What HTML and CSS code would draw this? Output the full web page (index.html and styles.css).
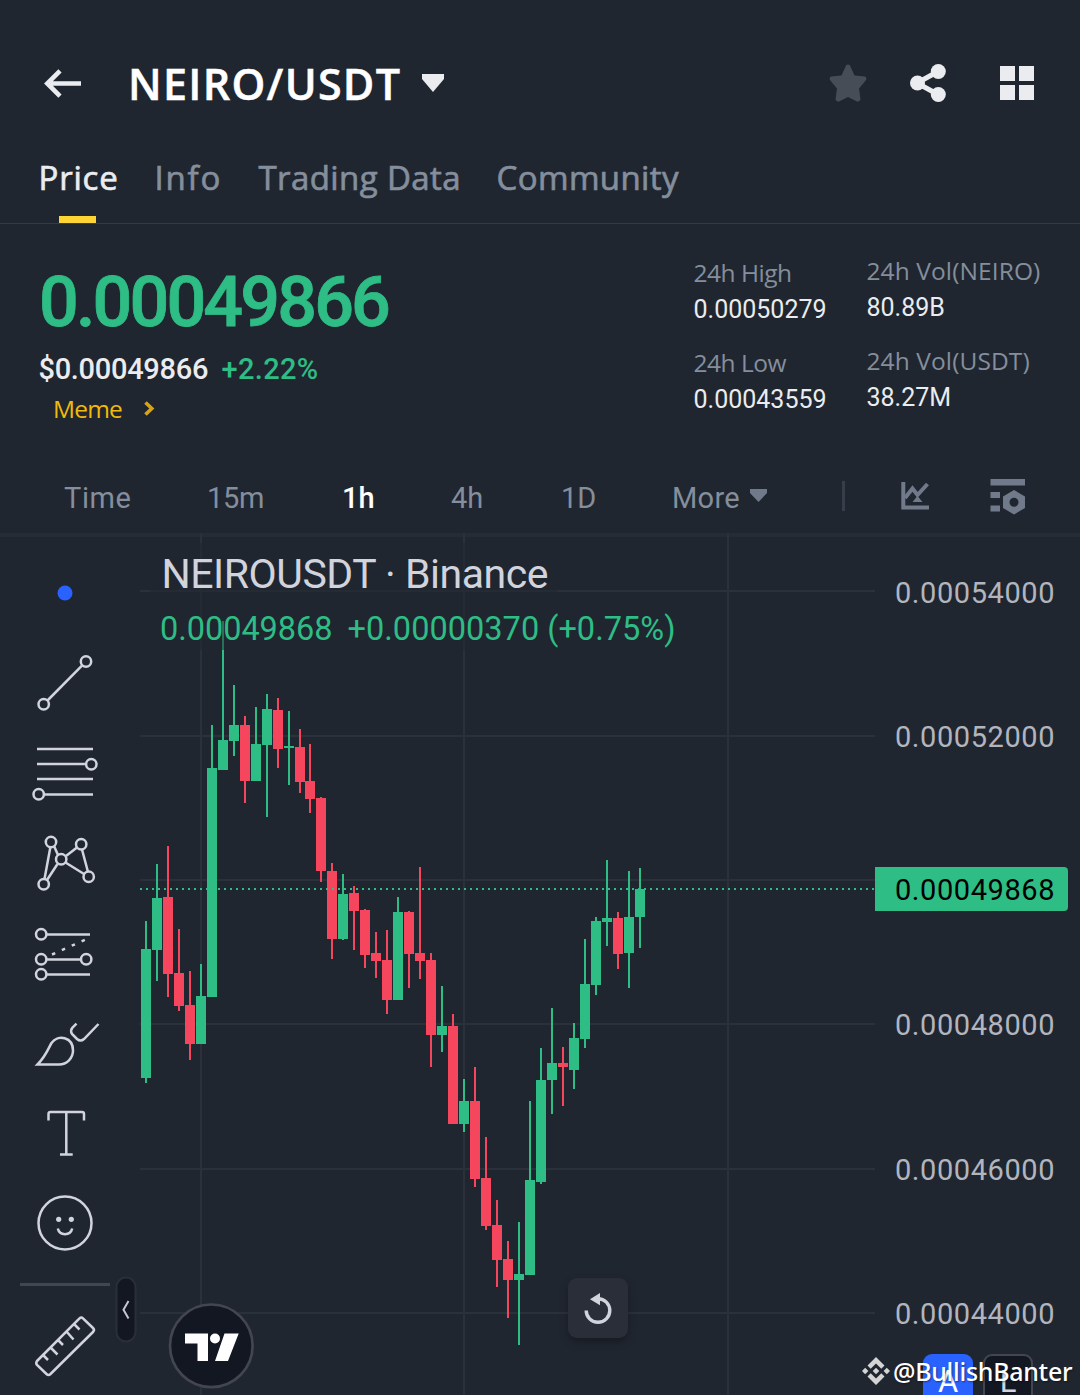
FILE: index.html
```html
<!DOCTYPE html>
<html lang="en">
<head>
<meta charset="utf-8">
<title>NEIRO/USDT</title>
<link rel="stylesheet" href="styles.css">
</head>
<body>
<div class="app">
  <header class="header">
    <svg class="back" width="38" height="30" viewBox="43 69 38 30"><path d="M80 83.500H47M59 70.800L46.300 83.500L59 96.200" fill="none" stroke="#eaecef" stroke-width="4.600"/></svg>
    <h1 class="title">NEIRO/USDT</h1>
    <svg class="title-caret" width="24" height="18" viewBox="0 0 24 18"><path d="M1 0H23V5L12 18L1 5Z" fill="#eaecef"/></svg>
    <div class="actions">
      <svg width="38" height="40" viewBox="0 0 38 40"><path d="M17 2.500Q19 .5 21 2.500L25.500 12.500L36 13.600Q38.500 15.500 36.500 17.800L30 25.500L31.500 36.500Q30 39.500 27.500 38.300L19 34L10.500 38.300Q8 39.500 6.500 36.500L8 25.500L1.500 17.800Q-.5 15.500 2 13.600L12.500 12.500Z" fill="#474d57"/></svg>
      <svg width="36" height="38" viewBox="0 0 36 38"><path d="M28 7.500L7 19L28 30.500" fill="none" stroke="#eaecef" stroke-width="5"/><g fill="#eaecef"><circle cx="28.300" cy="7.500" r="7.500"/><circle cx="7.500" cy="19" r="7.500"/><circle cx="28.300" cy="30.500" r="7.500"/></g></svg>
      <svg width="34" height="34" viewBox="0 0 34 34"><path d="M0 0H15V15H0ZM19 0H34V15H19ZM0 19H15V34H0ZM19 19H34V34H19Z" fill="#eaecef"/></svg>
    </div>
  </header>

  <nav class="tabs">
    <span class="tab tab-active">Price</span>
    <span class="tab tab-info">Info</span>
    <span class="tab tab-trading">Trading Data</span>
    <span class="tab tab-community">Community</span>
  </nav>

  <section class="summary">
    <div class="quote">
      <div class="last-price">0.00049866</div>
      <div class="fiat"><span>$0.00049866</span><span class="change">+2.22%</span></div>
      <div class="category"><span>Meme</span><svg width="11" height="15" viewBox="0 0 11 15"><path d="M1.500 1.500L7.800 7.500L1.500 13.500" fill="none" stroke="#d9a40e" stroke-width="3.600"/></svg></div>
    </div>
    <div class="stats stats-range">
      <div class="stat"><span class="stat-label">24h High</span><span class="stat-value">0.00050279</span></div>
      <div class="stat"><span class="stat-label">24h Low</span><span class="stat-value">0.00043559</span></div>
    </div>
    <div class="stats stats-volume">
      <div class="stat"><span class="stat-label">24h Vol(NEIRO)</span><span class="stat-value">80.89B</span></div>
      <div class="stat"><span class="stat-label">24h Vol(USDT)</span><span class="stat-value">38.27M</span></div>
    </div>
  </section>

  <nav class="intervals">
    <span>Time</span>
    <span>15m</span>
    <span class="interval-active">1h</span>
    <span>4h</span>
    <span>1D</span>
    <span class="more">More<svg width="17" height="13" viewBox="0 0 17 13"><path d="M0 0H17V4L8.500 13L0 4Z" fill="#707a8a"/></svg></span>
    <svg class="interval-tools" width="190" height="40" viewBox="840 476 190 40">
      <path d="M843.500 481V511" stroke="#373e49" stroke-width="3"/>
      <g fill="none" stroke="#707a8a" stroke-width="4"><path d="M903.300 482V507.500H929"/><path d="M905 498L912.500 488.500L917.500 495L927.500 484"/></g>
      <path d="M917.500 496L922.500 502H912.500Z" fill="#707a8a"/>
      <g fill="#707a8a"><path d="M990.500 479H1025V485.500H990.500ZM990.500 492H1000V498H990.500ZM990.500 505.500H1000V511.500H990.500Z"/><path fill-rule="evenodd" d="M1014 490L1025 496.500V508L1014 514.500L1003 508V496.500ZM1014 497.800A4.500 4.500 0 1 0 1014 506.800A4.500 4.500 0 1 0 1014 497.800Z"/></g>
    </svg>
  </nav>

  <main class="chart-area">
    <aside class="toolbar">
      <svg viewBox="20 548 90 90"><circle cx="65" cy="593" r="7.500" fill="#2962ff"/></svg>
      <svg class="tool" viewBox="20 638 90 90"><circle cx="86" cy="661.500" r="5.200"/><circle cx="43.700" cy="704.300" r="5.200"/><path d="M47.500 700.500L82.200 665.300"/></svg>
      <svg class="tool" viewBox="20 728 90 90"><path d="M37 749H93M37 764H86M37 779H93M44 794.500H93"/><circle cx="91.300" cy="764.300" r="5.200"/><circle cx="38.700" cy="794.300" r="5.200"/></svg>
      <svg class="tool" viewBox="20 818 90 90"><path d="M50.400 847L44.500 879M54 846L58 855M47 880L57.500 864M66 856L77 847.500M65.500 862.500L84 874M82 849.500L88 872"/><circle cx="51" cy="842" r="5.200"/><circle cx="81.200" cy="844.300" r="5.200"/><circle cx="61.200" cy="859.300" r="5.200"/><circle cx="43.700" cy="884.300" r="5.200"/><circle cx="88.700" cy="876.700" r="5.200"/></svg>
      <svg class="tool" viewBox="20 908 90 90"><path d="M46.500 934.500H90M46.500 959.500H81M46.500 974.500H90"/><path d="M52 954.500L88 938.500" stroke-dasharray="3.500 7.300"/><circle cx="41.200" cy="934.300" r="5.200"/><circle cx="41.200" cy="959.300" r="5.200"/><circle cx="86.200" cy="959.300" r="5.200"/><circle cx="41.200" cy="974.300" r="5.200"/></svg>
      <svg class="tool" viewBox="20 998 90 90"><path d="M37.500 1064.500C46 1056 48.500 1048 51.500 1043C58 1034 73 1037 73 1050.500C73 1058 67 1064.500 59 1064.500Z"/><path d="M76.500 1023.700L72.500 1027.500Q70 1030.500 72 1034L77 1039Q80.500 1042 84 1039L98.500 1024"/></svg>
      <svg class="tool" viewBox="20 1088 90 90"><path d="M48.500 1120.500V1114Q48.500 1112 50.500 1112H82Q84 1112 84 1114V1120.500M66.300 1112V1154.500M60 1154.500H72.700"/></svg>
      <svg class="tool" viewBox="20 1178 90 90"><circle cx="65" cy="1223" r="26.500"/><path d="M57.800 1228.500C59.500 1236 70.500 1236 72.200 1228.500"/><g class="tool-fill"><circle cx="58.700" cy="1219.300" r="2.600"/><circle cx="71.300" cy="1219.300" r="2.600"/></g></svg>
      <div class="separator"></div>
      <svg class="tool" viewBox="20 1301 90 90"><path d="M37 1361L79.500 1318.500Q81.300 1316.500 83 1318.500L93 1328Q95 1330 93 1332L50.500 1374Q48.500 1376 46.500 1374L37 1365Q35.500 1363 37 1361ZM43.500 1355.500L48 1360M50.500 1347.500L57.500 1354.500M58 1340L63 1345M66.500 1331.500L73.500 1339.500M74 1324L79.500 1329.500"/></svg>
    </aside>
    <svg class="chart" id="chart" width="940" height="862" viewBox="140 533 940 862"></svg>

    <svg class="collapse" width="22" height="68" viewBox="0 0 22 68"><rect x="1.500" y="1.500" width="19" height="64" rx="9.500" fill="#131722" stroke="#2a2e39" stroke-width="2"/><path d="M13.500 25L8.500 33.700L13.500 42.500" fill="none" stroke="#c5c8d0" stroke-width="2"/></svg>
    <svg class="tv-logo" width="86" height="86" viewBox="168 1302.500 86 86"><circle cx="211.300" cy="1345.300" r="41.300" fill="#131722" stroke="#434651" stroke-width="2.700"/><g fill="#fff"><path d="M185 1333H208V1360.500H197.500V1343H185ZM224.500 1333H238.700L228 1360.500H215Z"/><circle cx="215" cy="1338" r="5"/></g></svg>
    <div class="reset"><svg width="28" height="32" viewBox="0 0 28 32"><path d="M2.200 17.500A11.800 11.800 0 1 0 14 5.700" fill="none" stroke="#d1d4dc" stroke-width="3.400"/><path d="M6 6.200L16 0V12.300Z" fill="#d1d4dc"/></svg></div>
    <div class="scale-btn scale-auto">A</div>
    <div class="scale-btn scale-log">L</div>
    <div class="watermark">
      <svg width="28" height="28" viewBox="0 0 28 28" fill="#d4d4d4"><path d="M14 0L22.500 8.500L19.300 11.700L14 6.400L8.700 11.700L5.500 8.500ZM14 28L22.500 19.500L19.300 16.300L14 21.600L8.700 16.300L5.500 19.500ZM14 10.700L17.300 14L14 17.300L10.700 14ZM3.200 10.800L6.400 14L3.200 17.200L0 14ZM24.800 10.800L28 14L24.800 17.200L21.600 14Z"/></svg>
      <span>@BullishBanter</span>
    </div>
  </main>
</div>
<script src="chart.js"></script>
</body>
</html>
```
FILE: styles.css
```css
* { box-sizing: border-box; }
body { margin: 0; background: #202630; }
svg { display: block; flex: none; }
.app { position: relative; width: 1080px; height: 1395px; overflow: hidden; background: #202630; font-family: "Open Sans", "Noto Sans", sans-serif; color: #eaecef; }

.header { display: flex; align-items: center; height: 140px; padding: 27px 46px 0 44px; }
.title { margin: 0 0 0 46px; width: 276px; font-size: 43px; line-height: 61px; font-weight: 600; color: #fff; white-space: nowrap; letter-spacing: 1.300px; -webkit-text-stroke: .5px #fff; }
.title-caret { margin-left: 17px; margin-bottom: 1px; }
.actions { display: flex; align-items: center; margin: 0 0 1px auto; }
.actions svg:nth-child(2) { margin: 0 54px 0 43px; }

.tabs { display: flex; height: 84px; padding-left: 38.500px; border-bottom: 1px solid #333b47; font-size: 33px; line-height: 75px; color: #848e9c; white-space: nowrap; letter-spacing: .4px; -webkit-text-stroke: .7px currentColor; }
.tab { position: relative; }
.tab-active { width: 116px; color: #eaecef; letter-spacing: .8px; }
.tab-active::after { content: ""; position: absolute; left: 20.500px; bottom: 0; width: 37px; height: 7.500px; background: #fcd535; }
.tab-info { width: 104px; letter-spacing: 1.800px; }
.tab-trading { width: 238px; }

.summary { display: flex; height: 236px; font-family: Roboto, sans-serif; white-space: nowrap; }
.quote { width: 693.500px; padding: 38px 0 0 39px; }
.last-price { font-size: 70px; line-height: 80px; font-weight: 500; color: #2ebd85; letter-spacing: -2.850px; -webkit-text-stroke: .8px #2ebd85; }
.fiat { display: flex; gap: 14px; padding-top: 7px; font-size: 29px; line-height: 40px; font-weight: 500; }
.fiat span { margin-left: -.5px; letter-spacing: -.3px; }
.fiat .change { color: #2ebd85; letter-spacing: .3px; }
.category { display: flex; align-items: center; gap: 21.500px; padding: 1px 0 0 14px; font-family: "Open Sans", sans-serif; font-size: 24.500px; line-height: 37px; color: #f0b90b; letter-spacing: -.8px; }
.stats { display: flex; flex-direction: column; gap: 20px; }
.stats-range { width: 173px; padding-top: 31px; }
.stats-volume { padding-top: 29px; }
.stat { display: flex; flex-direction: column; line-height: 35px; }
.stat-label { font-family: "Open Sans", sans-serif; font-size: 24.500px; color: #848e9c; }
.stats-range .stat-label { letter-spacing: -.5px; }
.stats-volume .stat-label { letter-spacing: .1px; }
.stat-value { position: relative; top: 1.500px; font-size: 25px; }

.intervals { display: flex; height: 77px; padding-left: 64px; border-bottom: 4px solid #262c36; font-family: Roboto, sans-serif; font-size: 29px; line-height: 76px; color: #848e9c; white-space: nowrap; }
.intervals span:nth-child(1) { width: 143px; letter-spacing: .6px; }
.intervals span:nth-child(2) { width: 135px; letter-spacing: -.3px; }
.intervals span:nth-child(3) { width: 109px; }
.intervals span:nth-child(4) { width: 110px; }
.intervals span:nth-child(5) { width: 111px; }
.interval-active { color: #fff; font-weight: 500; }
.more { display: flex; width: 168px; letter-spacing: .3px; }
.more svg { margin: 29px 0 0 10px; }
.interval-tools { margin-top: 16px; }

.chart-area { display: flex; position: relative; height: 858px; font-family: Roboto, sans-serif; }
.chart { margin-top: -4px; }
.toolbar { width: 140px; padding: 11px 0 0 20px; }
.toolbar svg { width: 90px; height: 90px; }
.tool { fill: none; stroke: #d1d4dc; stroke-width: 2.500; }
.tool-fill { fill: #d1d4dc; stroke: none; }
.separator { width: 90px; height: 3px; margin: 15px 0; background: #434651; }
.collapse { position: absolute; left: 115px; top: 739px; }
.tv-logo { position: absolute; left: 168px; top: 765.500px; }
.reset { position: absolute; left: 568px; top: 741px; width: 60px; height: 60px; border-radius: 9px; background: #2a2e39; box-shadow: 0 4px 8px rgba(0, 0, 0, .3); padding: 15px 0 0 16px; }
.scale-btn { position: absolute; top: 817px; width: 50px; height: 50px; border-radius: 9px; font-size: 31px; line-height: 55px; text-align: center; }
.scale-auto { left: 923px; background: #2962ff; color: #fff; }
.scale-log { left: 983px; border: 2px solid #434651; background: #131722; color: #d1d4dc; line-height: 51px; }
.watermark { position: absolute; left: 862px; top: 816px; display: flex; align-items: center; gap: 3px; font-family: "Noto Sans", sans-serif; font-size: 25px; line-height: 36px; font-weight: 500; color: #fff; letter-spacing: -.3px; text-shadow: 1px 1px 2px rgba(0, 0, 0, .45); }

.grid { stroke: #2b313b; stroke-width: 2; }
.up { fill: #2ebd85; }
.down { fill: #f6465d; }
.price-line { stroke: #2ebd85; stroke-width: 2; stroke-dasharray: 2 4; }
.legend-back { fill: #202630; opacity: .5; }
.legend-title { font-size: 41px; fill: #d1d4dc; }
.legend-price { font-size: 32.500px; fill: #2ebd85; }
.axis { font-size: 29px; fill: #b2b5be; }
.axis-current { font-size: 29px; fill: #000; }
```
FILE: chart.js
```js
// Each candle: centre x, high, body top, body bottom, low, direction
const candles = [
  [146,921,949,1078,1083,1],[157,864,898,950,981,1],[168,846,897,974,997,0],[179,929,973,1006,1011,0],
  [190,971,1005,1044,1060,0],[201,964,996,1044,1044,1],[212,725,768,997,997,1],[223,621,740,770,770,1],
  [234,685,725,741,756,1],[245,716,725,781,803,0],[256,707,744,781,781,1],[267,694,709,745,817,1],
  [278,698,710,749,768,0],[289,711,746,748,785,1],[300,729,747,782,793,0],[310,744,781,799,813,0],
  [321,797,798,871,882,0],[332,863,871,939,959,0],[343,874,894,939,940,1],[354,886,893,911,950,0],
  [365,909,910,955,968,0],[376,932,953,961,978,0],[387,930,960,1000,1014,0],[398,897,912,1000,1000,1],
  [409,911,912,954,988,0],[420,867,953,961,979,0],[431,953,960,1035,1067,0],[442,986,1026,1035,1052,1],
  [453,1014,1026,1124,1124,0],[464,1079,1101,1124,1132,1],[475,1067,1101,1179,1187,0],[486,1137,1178,1226,1230,0],
  [497,1200,1225,1260,1287,0],[508,1241,1259,1280,1318,0],[519,1222,1274,1280,1345,1],[530,1101,1180,1275,1275,1],
  [541,1048,1080,1182,1184,1],[552,1008,1063,1080,1114,1],[563,1047,1063,1067,1106,0],[574,1023,1038,1070,1089,1],
  [585,939,984,1039,1048,1],[596,917,921,985,995,1],[607,860,918,922,946,1],[618,912,918,954,969,0],
  [629,871,917,953,988,1],[640,868,889,917,948,1]
];
const gridX = [201, 464, 728];
const gridY = [591, 736, 880, 1024, 1169, 1313];
const labels = [[603, "0.00054000"], [747, "0.00052000"], [1035, "0.00048000"], [1180, "0.00046000"], [1324, "0.00044000"]];

let out = '<g class="grid">';
gridX.forEach(x => out += `<path d="M${x} 533V1395"/>`);
gridY.forEach(y => out += `<path d="M140 ${y}H875"/>`);
out += '</g>';
candles.forEach(([x, high, top, bottom, low, up]) => {
  out += `<g class="${up ? 'up' : 'down'}"><rect x="${x - 1}" y="${high}" width="2" height="${low - high}"/><rect x="${x - 5}" y="${top}" width="10" height="${bottom - top}"/></g>`;
});
out += '<path class="price-line" d="M140 889H875"/>';
out += '<rect class="legend-back" x="150" y="543" width="408" height="61"/><rect class="legend-back" x="150" y="604" width="533" height="46"/>';
out += '<text class="legend-title" x="161.500" y="588" textLength="387">NEIROUSDT · Binance</text>';
out += '<text class="legend-price" x="160" y="640" textLength="172.500">0.00049868</text>';
out += '<text class="legend-price" x="347.500" y="640" textLength="328">+0.00000370 (+0.75%)</text>';
labels.forEach(([y, text]) => out += `<text class="axis" x="895" y="${y}" textLength="159.500">${text}</text>`);
out += '<path class="up" d="M875 867H1064Q1068 867 1068 871V907Q1068 911 1064 911H875Z"/>';
out += '<text class="axis-current" x="895" y="900" textLength="159.500">0.00049868</text>';
document.getElementById('chart').innerHTML = out;
```
